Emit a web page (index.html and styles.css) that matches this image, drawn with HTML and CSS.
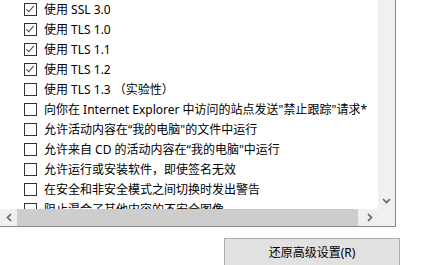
FILE: index.html
```html
<!DOCTYPE html>
<html lang="zh-CN">
<head>
    <meta charset="UTF-8">
    <title>高级设置</title>
    <link rel="stylesheet" href="styles.css">
</head>
<body>
    <div class="listbox">
        <div class="list-area">
            <ul class="options">
                <li><span class="check on"></span>使用 SSL 3.0</li>
                <li><span class="check on"></span>使用 TLS 1.0</li>
                <li><span class="check on"></span>使用 TLS 1.1</li>
                <li><span class="check on"></span>使用 TLS 1.2</li>
                <li><span class="check"></span>使用 TLS 1.3 （实验性）</li>
                <li><span class="check"></span>向你在 Internet Explorer 中访问的站点发送"禁止跟踪"请求*</li>
                <li><span class="check"></span>允许活动内容在“我的电脑"的文件中运行</li>
                <li><span class="check"></span>允许来自 CD 的活动内容在“我的电脑"中运行</li>
                <li><span class="check"></span>允许运行或安装软件，即使签名无效</li>
                <li><span class="check"></span>在安全和非安全模式之间切换时发出警告</li>
                <li><span class="check"></span>阻止混合了其他内容的不安全图像</li>
            </ul>
        </div>
        <div class="vscroll">
            <div class="sb-btn">
                <svg width="9" height="6" viewBox="0 0 9 6"><polyline points="1,1 4.5,4.5 8,1" fill="none" stroke="#606060" stroke-width="1.6"/></svg>
            </div>
        </div>
        <div class="hscroll">
            <div class="sb-btn">
                <svg width="6" height="9" viewBox="0 0 6 9"><polyline points="5,1 1.5,4.5 5,8" fill="none" stroke="#606060" stroke-width="1.6"/></svg>
            </div>
            <div class="thumb"></div>
            <div class="sb-btn">
                <svg width="6" height="9" viewBox="0 0 6 9"><polyline points="1,1 4.5,4.5 1,8" fill="none" stroke="#606060" stroke-width="1.6"/></svg>
            </div>
        </div>
        <div class="corner"></div>
    </div>
    <div class="actions">
        <button class="reset">还原高级设置(R)</button>
    </div>
</body>
</html>
```

FILE: styles.css
```css
body {
    margin: 0;
    background-color: #fff;
    font-family: "Noto Sans", "Noto Sans CJK SC", sans-serif;
    font-size: 12px;
    color: #000;
}
.listbox {
    display: grid;
    grid-template-columns: 378px 17px;
    grid-template-rows: 209px 17px;
    width: 395px;
    border-right: 1px solid #828790;
    border-bottom: 1px solid #828790;
    background-color: #fff;
}
.list-area {
    overflow: hidden;
}
.options {
    list-style: none;
    margin: -1px 0 0 0;
    padding: 0;
}
.options li {
    display: flex;
    align-items: center;
    height: 20px;
    white-space: nowrap;
}
.check {
    width: 11px;
    height: 11px;
    border: 1px solid #333;
    margin-left: 24px;
    margin-right: 7px;
    position: relative;
    flex-shrink: 0;
}
.check.on:after {
    content: "";
    position: absolute;
    left: 3px;
    top: 0px;
    width: 3px;
    height: 7px;
    border-right: 1.2px solid #444;
    border-bottom: 1.2px solid #444;
    transform: rotate(40deg);
}
.vscroll {
    background-color: #f0f0f0;
    display: flex;
    flex-direction: column;
    justify-content: flex-end;
}
.hscroll {
    background-color: #f0f0f0;
    display: flex;
}
.sb-btn {
    width: 17px;
    height: 17px;
    display: flex;
    align-items: center;
    justify-content: center;
    flex-shrink: 0;
}
.thumb {
    width: 341px;
    margin-right: 3px;
    background-color: #cdcdcd;
}
.corner {
    background-color: #f0f0f0;
}
.actions {
    padding: 11px 0 0 224px;
}
.reset {
    width: 176px;
    height: 28px;
    border: 1px solid #adadad;
    background-color: #e1e1e1;
    font-family: "Noto Sans", "Noto Sans CJK SC", sans-serif;
    font-size: 12px;
    color: #000;
    padding: 0;
}
```
